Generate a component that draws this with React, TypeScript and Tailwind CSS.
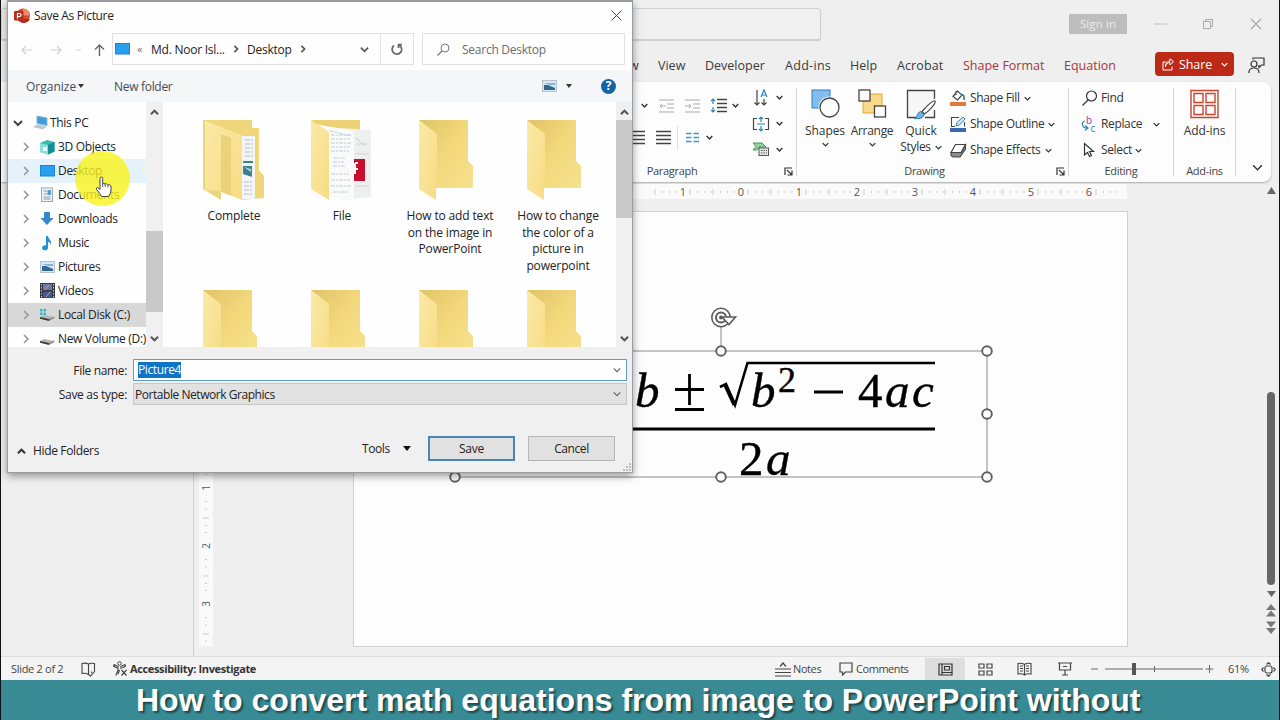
import React from "react";

type Kids = { children?: React.ReactNode };

function Chevron({ dir = "down", size = 8, color = "#333", w = 1.4 }: { dir?: "down" | "up" | "right"; size?: number; color?: string; w?: number }) {
  const d = dir === "down" ? "M1 3 L5 7 L9 3" : dir === "up" ? "M1 7 L5 3 L9 7" : "M3 1 L7 5 L3 9";
  return (
    <svg width={size} height={size} viewBox="0 0 10 10" className="shrink-0">
      <path d={d} fill="none" stroke={color} strokeWidth={w * (10 / size)} />
    </svg>
  );
}

function Lines({ w = 15, color = "#444" }: { w?: number; color?: string }) {
  return (
    <svg width={w} height="15" viewBox={`0 0 ${w} 15`} className="shrink-0">
      <path d={`M0 1.5H${w}M0 5.5H${w}M0 9.5H${w}M0 13.5H${w}`} stroke={color} strokeWidth="1.3" />
    </svg>
  );
}

function Indent({ right }: { right?: boolean }) {
  return (
    <svg width="15" height="14" viewBox="0 0 15 14" className="shrink-0">
      <path d="M0 1H15M8 5H15M8 9H15M0 13H15" stroke="#aaa" strokeWidth="1.2" />
      <path d={right ? "M0 7H6M4 5L6 7L4 9" : "M1 7H7M3 5L1 7L3 9"} stroke="#aaa" fill="none" />
    </svg>
  );
}

function Launcher() {
  return (
    <svg width="9" height="9" viewBox="0 0 9 9">
      <path d="M1 8V1H8M3 3L7.500 7.500M8 3.500V8H3.500" fill="none" stroke="#333" strokeWidth="1.2" />
    </svg>
  );
}

/* ---------- title bar and tabs ---------- */

function TitleBar() {
  return (
    <div className="flex h-[48px] shrink-0 items-center">
      <div className="h-[32px] w-[820px] rounded-[3px] border border-[#cfcfcf] bg-[#f0f0f0] shadow-[0_1px_1px_#ccc]" />
      <div className="ml-[248px] flex h-[20px] w-[58px] items-center justify-center bg-[#bdbdbd] text-[11.5px] tracking-[0.1px] text-[#ececec]">Sign in</div>
      <svg width="14" height="14" viewBox="0 0 14 14" className="ml-[27px]"><path d="M0 7H13" stroke="#c4c4c4" /></svg>
      <svg width="12" height="12" viewBox="0 0 12 12" className="ml-[34px]">
        <path d="M1.500 3.500H8.500V10.500H1.500ZM3.500 3V1.500H10.500V8.500H9" fill="none" stroke="#aaa" />
      </svg>
      <svg width="12" height="12" viewBox="0 0 12 12" className="ml-[36px]"><path d="M1 1L11 11M11 1L1 11" stroke="#aaa" strokeWidth="1.1" /></svg>
    </div>
  );
}

function Tabs() {
  return (
    <div className="flex h-[34px] shrink-0 items-center whitespace-nowrap pl-[628px] pt-[3px] text-[12.5px] text-[#3b3b3b]">
      <span className="w-[29px]">w</span>
      <span className="w-[47px]">View</span>
      <span className="w-[80px]">Developer</span>
      <span className="w-[65px] tracking-[0.3px]">Add-ins</span>
      <span className="w-[47px]">Help</span>
      <span className="w-[66px] tracking-[0.1px]">Acrobat</span>
      <span className="w-[101px] text-[#a4373a]">Shape Format</span>
      <span className="w-[91px] text-[#a4373a]">Equation</span>
      <div className="-mt-[5px] flex h-[24px] w-[79px] items-center rounded-[4px] bg-[#bc2a17] pl-[7px] text-white">
        <svg width="12" height="13" viewBox="0 0 12 13">
          <path d="M4 4H1V12H10V8.500M3.500 9C3.500 6 5.500 4.500 8 4.500V7L11.500 3.700L8 .8V3C5 3 3.500 5.500 3.500 9Z" fill="none" stroke="#fff" />
        </svg>
        <span className="ml-[5px] mt-[2px] w-[42px] tracking-[-0.1px]">Share</span>
        <Chevron size={7} color="#fff" w={1.2} />
      </div>
      <svg width="17" height="17" viewBox="0 0 17 17" className="-mt-[3px] ml-[14px]">
        <circle cx="6" cy="7" r="3" fill="none" stroke="#333" strokeWidth="1.2" />
        <path d="M.8 16C.8 12.500 3 11 6 11S11 12.500 11 16M5 2.500V1H16V8H13.500L11 10.500V8" fill="none" stroke="#333" strokeWidth="1.2" />
      </svg>
    </div>
  );
}

/* ---------- ribbon ---------- */

function Group({ label, w, launcher, labelPad, children }: Kids & { label: string; w: string; launcher?: boolean; labelPad?: string }) {
  return (
    <div className={`flex h-full shrink-0 flex-col ${w}`}>
      <div className="flex h-[77px]">{children}</div>
      <div className="flex h-[18px] items-center text-[11px] tracking-[-0.3px] text-[#444]">
        <span className={`flex-1 whitespace-nowrap text-center ${labelPad ?? ""}`}>{label}</span>
        {launcher && <span className="mr-[3px] w-[9px]"><Launcher /></span>}
      </div>
    </div>
  );
}

function Divider() {
  return <div className="mt-[3px] h-[88px] w-px shrink-0 bg-[#d4d4d4]" />;
}

function BigButton({ icon, w, children }: Kids & { icon: React.ReactNode; w: string }) {
  return (
    <div className={`flex shrink-0 flex-col items-center pt-[4px] text-[12px] leading-[16px] tracking-[-0.1px] text-[#333] ${w}`}>
      <div className="mb-[4px] h-[30px]">{icon}</div>
      {children}
    </div>
  );
}

function SmallRow({ icon, label, tw, chev }: { icon: React.ReactNode; label: string; tw: string; chev?: boolean }) {
  return (
    <div className="flex h-[26px] items-center whitespace-nowrap text-[12px] tracking-[-0.35px] text-[#333]">
      <span className="w-[20px] shrink-0">{icon}</span>
      <span className={tw}>{label}</span>
      {chev && <Chevron size={7} w={1.3} />}
    </div>
  );
}

function Ribbon() {
  return (
    <div className="mr-[8px] flex h-[100px] shrink-0 rounded-br-[8px] rounded-tr-[8px] bg-[#fdfdfd] pt-[3px] shadow-[0_1px_2px_#aaa]">
      <div className="w-[632px] shrink-0" />
      <Group label="Paragraph" w="w-[163px]" launcher labelPad="pr-[73px]">
        <div className="w-[119px]">
          <div className="mt-[13px] flex h-[15px] items-center">
            <span className="ml-[8px]"><Chevron size={7} /></span>
            <span className="ml-[11px]"><Indent /></span>
            <span className="ml-[11px]"><Indent right /></span>
            <svg width="17" height="15" viewBox="0 0 17 15" className="ml-[10px]">
              <path d="M7 1.500H17M7 5.500H17M7 9.500H17M7 13.500H17" stroke="#444" strokeWidth="1.300" />
              <path d="M3 1V6M1 3L3 1L5 3M3 9V14M1 12L3 14L5 12" stroke="#2e86c1" fill="none" strokeWidth="1.200" />
            </svg>
            <span className="ml-[5px]"><Chevron size={7} /></span>
          </div>
          <div className="mt-[17px] flex h-[15px] items-center">
            <Lines w={12} />
            <span className="ml-[11px]"><Lines /></span>
            <span className="ml-[6px] h-[24px] w-px bg-[#ddd]" />
            <svg width="13" height="11" viewBox="0 0 13 11" className="ml-[8px]">
              <path d="M0 1.500H5.500M0 5.500H5.500M0 9.500H5.500M7.500 1.500H13M7.500 5.500H13M7.500 9.500H13" stroke="#3a9bc9" strokeWidth="1.300" />
            </svg>
            <span className="ml-[7px]"><Chevron size={7} /></span>
          </div>
        </div>
        <div className="flex flex-col">
          <div className="flex h-[26px] items-center gap-[6px]">
            <svg width="18" height="18" viewBox="0 0 18 18">
              <path d="M5 1V16M2.500 13.500L5 16L7.500 13.500M12 10V16M9.500 13.500L12 16L14.500 13.500" fill="none" stroke="#444" strokeWidth="1.200" />
              <path d="M9 8L12 1L15 8M10 6H14" fill="none" stroke="#2e86c1" strokeWidth="1.200" />
            </svg>
            <Chevron size={7} />
          </div>
          <div className="flex h-[26px] items-center gap-[6px]">
            <svg width="18" height="16" viewBox="0 0 18 16">
              <path d="M5 2.500H1.500V13.500H5M13 2.500H16.500V13.500H13" fill="none" stroke="#444" strokeWidth="1.200" />
              <path d="M5 8H13M9 1V6M7 3L9 1L11 3M9 15V10M7 13L9 15L11 13" fill="none" stroke="#2e86c1" strokeWidth="1.200" />
            </svg>
            <Chevron size={7} />
          </div>
          <div className="flex h-[26px] items-center gap-[6px]">
            <svg width="18" height="14" viewBox="0 0 18 14">
              <path d="M1 1H10L14 5H7L5 8H1L4 4.500Z" fill="#9bd1a4" stroke="#3b9b55" />
              <rect x="7" y="6" width="9.500" height="7.500" fill="#e8e8e8" stroke="#555" />
              <path d="M9 8.500H15M9 11H15" stroke="#555" strokeDasharray="1.500 1" />
            </svg>
            <Chevron size={7} />
          </div>
        </div>
      </Group>
      <Divider />
      <Group label="Drawing" w="w-[271px]" launcher labelPad="pr-[4px]">
        <div className="w-[4px]" />
        <BigButton w="w-[48px]" icon={
          <svg width="29" height="30" viewBox="0 0 29 30">
            <rect x="1" y="1" width="18" height="18" fill="#83bdee" stroke="#2f7fbf" />
            <circle cx="18.500" cy="18.500" r="11" fill="#fdfdfd" />
            <circle cx="18.500" cy="18.500" r="9.500" fill="#fdfdfd" stroke="#444" strokeWidth="1.300" />
          </svg>}>
          <span>Shapes</span>
          <span className="mt-[2px]"><Chevron size={7} w={1.3} /></span>
        </BigButton>
        <BigButton w="w-[46px]" icon={
          <svg width="29" height="30" viewBox="0 0 29 30">
            <path d="M9 5H24V24H5V12H9Z" fill="#fbd98a" stroke="#e2a336" />
            <rect x="1" y="1" width="11" height="11" fill="#fdfdfd" stroke="#444" strokeWidth="1.300" />
            <rect x="16.500" y="17" width="11" height="11" fill="#fdfdfd" stroke="#444" strokeWidth="1.300" />
          </svg>}>
          <span className="tracking-[-0.3px]">Arrange</span>
          <span className="mt-[2px]"><Chevron size={7} w={1.3} /></span>
        </BigButton>
        <BigButton w="w-[52px]" icon={
          <svg width="32" height="31" viewBox="0 0 32 31">
            <path d="M11 28.500H2.500V1.500H29.500V10M29.500 21V28.500H20" fill="#f7f7f7" stroke="#444" strokeWidth="1.300" />
            <path d="M30 12C31.500 14 24 22 19.500 25L17 22.500C21 18 28 10.500 30 12Z" fill="#fff" stroke="#444" strokeWidth="1.200" />
            <path d="M19 25.500C18 29 15 30 9.500 29.500C13 28.500 11.500 24 15.500 22.500Z" fill="#6db5e8" stroke="#2374ab" />
          </svg>}>
          <span>Quick</span>
          <span className="flex items-center gap-[4px] tracking-[-0.3px]">Styles <Chevron size={7} w={1.3} /></span>
        </BigButton>
        <div className="ml-[3px]">
          <SmallRow label="Shape Fill" tw="w-[54px]" chev icon={
            <svg width="17" height="17" viewBox="0 0 17 17">
              <path d="M7.500 1L3 6.500L7.500 10L12 5Z M6 1V5" fill="none" stroke="#444" strokeWidth="1.200" />
              <path d="M12 4.500C14.500 5 14.500 7 14 10" fill="none" stroke="#2e6fa8" strokeWidth="1.600" />
              <rect y="12" width="16" height="4" fill="#dd7a3c" />
            </svg>} />
          <SmallRow label="Shape Outline" tw="w-[78px]" chev icon={
            <svg width="17" height="17" viewBox="0 0 17 17">
              <path d="M9 1.500H1.500V10.500H5M14.500 6V10.500" fill="none" stroke="#444" strokeWidth="1.100" />
              <path d="M6 10L7 6.500L13 1L15 3L9.500 9Z" fill="#cde6f7" stroke="#2e86c1" />
              <rect y="12" width="16" height="4" fill="#3f66b0" />
            </svg>} />
          <SmallRow label="Shape Effects" tw="w-[75px]" chev icon={
            <svg width="17" height="15" viewBox="0 0 17 15">
              <path d="M1 9.500V12.500L3 14H10L15.500 6V2L11 9.500Z" fill="#8d8d8d" stroke="#444" strokeWidth="1.100" />
              <path d="M1 9.500L5.500 1.500H15.500L11 9.500Z" fill="#fff" stroke="#444" strokeWidth="1.200" />
            </svg>} />
        </div>
      </Group>
      <Divider />
      <Group label="Editing" w="w-[104px]">
        <div className="pl-[12px]">
          <SmallRow label="Find" tw="w-[40px]" icon={
            <svg width="17" height="17" viewBox="0 0 17 17"><circle cx="10.500" cy="6" r="5" fill="none" stroke="#333" strokeWidth="1.200" /><path d="M7 10L1.500 15.500" stroke="#333" strokeWidth="1.300" /></svg>} />
          <SmallRow label="Replace" tw="w-[52px]" chev icon={
            <svg width="17" height="17" viewBox="0 0 17 17" className="overflow-visible">
              <text x="5" y="8" fontSize="10" fill="#a33c9c">b</text>
              <text x="9.500" y="15.500" fontSize="10" fill="#2e86c1">c</text>
              <path d="M4 5C0 6 .5 12 6 12M4 9.500L7 12L4 14.500" fill="none" stroke="#2e86c1" strokeWidth="1.200" />
            </svg>} />
          <SmallRow label="Select" tw="w-[34px]" chev icon={
            <svg width="15" height="16" viewBox="0 0 15 16"><path d="M3.500 1.500V13L6.500 10.500L8.500 14.500L10.500 13.500L8.500 9.500H12.500Z" fill="#fff" stroke="#333" strokeWidth="1.200" /></svg>} />
        </div>
      </Group>
      <Divider />
      <Group label="Add-ins" w="w-[61px]">
        <BigButton w="w-[61px]" icon={
          <svg width="29" height="30" viewBox="0 0 29 30">
            <path d="M1 1.500H28V28.500H1ZM4 4.500H13V13.500H4ZM16 4.500H25V13.500H16ZM4 16.500H13V25.500H4ZM16 16.500H25V25.500H16Z" fill="none" stroke="#c9452f" strokeWidth="1.400" />
          </svg>}>
          <span>Add-ins</span>
        </BigButton>
      </Group>
      <Divider />
      <div className="flex flex-1 items-end justify-center pb-[9px] pl-[8px]"><Chevron size={11} /></div>
    </div>
  );
}

/* ---------- work area ---------- */

function HRuler() {
  const nums = ["1", "0", "1", "2", "3", "4", "5", "6"];
  return (
    <div className="ml-[212px] flex h-[15px] w-[914px] overflow-hidden bg-[#fafafa] pl-[441px] text-[11px] leading-[14px] text-[#555]">
      {nums.map((n, i) => (
        <div key={i} className="flex w-[58px] shrink-0 items-center justify-between">
          <Ticks /><span>{n}</span><Ticks />
        </div>
      ))}
    </div>
  );
}

function Ticks() {
  return (
    <svg width="23" height="8" viewBox="0 0 23 8" className="shrink-0">
      <path d="M1 1V7M8.500 3V5M15.500 3V5M22 3V5" stroke="#ccc" />
    </svg>
  );
}

function VRuler() {
  return (
    <div className="ml-[5px] flex h-[435px] w-[14px] flex-col items-center bg-[#fafafa] pt-[248px] text-[10px] leading-[12px] text-[#555]">
      {["1", "2", "3"].map((n) => (
        <div key={n} className="flex h-[58px] shrink-0 flex-col items-center justify-between">
          <svg width="8" height="22" viewBox="0 0 8 22"><path d="M1 1H7M3 8.500H5M3 15.500H5" stroke="#ccc" /></svg>
          <span className="-rotate-90">{n}</span>
          <svg width="8" height="22" viewBox="0 0 8 22"><path d="M3 6.500H5M3 14H5" stroke="#ccc" /></svg>
        </div>
      ))}
      <svg width="8" height="10" viewBox="0 0 8 10"><path d="M1 1H7M3 8H5" stroke="#ccc" /></svg>
    </div>
  );
}

function Equation() {
  const handles = [[267, 6], [533, 6], [533, 69], [1, 132], [267, 132], [533, 132], [1, 6], [1, 69]];
  return (
    <svg width="560" height="190" viewBox="0 -45 560 190" className="absolute left-[100px] top-[88px] overflow-visible">
      <rect x="1" y="6" width="532" height="126" fill="none" stroke="#a6a6a6" strokeWidth="1.300" />
      <path d="M267 -18V6" stroke="#a6a6a6" strokeWidth="1.300" />
      <g fontFamily="'Liberation Serif', serif" fontSize="49" fill="#000" stroke="#000" strokeWidth=".4">
        <text x="181" y="62" fontStyle="italic">b</text>
        <text x="297" y="62" fontStyle="italic">b</text>
        <text x="324" y="47" fontSize="36">2</text>
        <text x="404" y="62">4</text>
        <text x="431" y="62" fontStyle="italic">a</text>
        <text x="458" y="62" fontStyle="italic">c</text>
        <text x="285" y="130">2</text>
        <text x="312" y="130" fontStyle="italic">a</text>
      </g>
      <path d="M221 44.500H250M235.500 29V60M221 64.500H250M360 47H389" stroke="#000" strokeWidth="2.800" fill="none" />
      <path d="M266 42L272 39L281 60L293.500 18H481" stroke="#000" strokeWidth="2.600" fill="none" />
      <path d="M271.500 40.500L280.500 60" stroke="#000" strokeWidth="4" />
      <path d="M100 84H481" stroke="#000" strokeWidth="3" />
      {handles.map(([x, y]) => <circle key={`${x}-${y}`} cx={x} cy={y} r="4.800" fill="#fff" stroke="#606060" strokeWidth="1.900" />)}
      <circle cx="267" cy="-27.500" r="10" fill="#5c5c5c" />
      <circle cx="267" cy="-27.500" r="7.200" fill="none" stroke="#fff" strokeWidth="2.400" />
      <circle cx="267" cy="-27.500" r="3" fill="none" stroke="#fff" strokeWidth="2" />
      <path d="M268 -28H281.500L275 -20.500Z" fill="#fff" stroke="#5c5c5c" strokeWidth="1.600" />
    </svg>
  );
}

function WorkArea() {
  return (
    <div className="flex h-[474px] shrink-0 pt-[2px]">
      <div className="w-[193px] border-r border-[#d0d0d0]" />
      <div className="flex flex-1 flex-col">
        <div className="-ml-[193px]"><HRuler /></div>
        <div className="flex pt-[12px]">
          <VRuler />
          <div className="relative ml-[140px] h-[436px] w-[775px] border border-[#cfcfcf] bg-[#fdfdfd]">
            <Equation />
          </div>
        </div>
      </div>
      <div className="flex w-[16px] flex-col items-center pt-[3px]">
        <svg width="9" height="7" viewBox="0 0 9 7"><path d="M0 7L4.500 0L9 7Z" fill="#666" /></svg>
        <div className="mt-[198px] h-[193px] w-[8px] rounded-[4px] bg-[#666]" />
        <svg width="9" height="6" viewBox="0 0 9 6" className="mt-[6px]"><path d="M0 0L4.500 6L9 0Z" fill="#666" /></svg>
        <svg width="10" height="13" viewBox="0 0 10 13" className="mt-[7px]"><path d="M0 6L5 0L10 6ZM0 12.500L5 6.500L10 12.500Z" fill="#777" /></svg>
        <svg width="10" height="13" viewBox="0 0 10 13" className="mt-[4px]"><path d="M0 .5L5 6.500L10 .5ZM0 7L5 13L10 7Z" fill="#777" /></svg>
      </div>
    </div>
  );
}

function StatusBar() {
  return (
    <div className="flex h-[24px] shrink-0 items-center whitespace-nowrap border-t border-[#dcdcdc] bg-[#f4f4f4] pt-px text-[11px] tracking-[-0.3px] text-[#444]">
      <span className="ml-[10px] w-[70px] pt-px">Slide 2 of 2</span>
      <svg width="15" height="15" viewBox="0 0 15 15">
        <path d="M7.500 2V12M7.500 2C5.500 1 3 1 1 1.500V11.500C3 11 5.500 11 7.500 12.500L9.500 14L13.500 9.500V1.500C11.500 1 9.500 1 7.500 2M10 9.500L11 11" fill="none" stroke="#444" strokeWidth="1.100" />
      </svg>
      <svg width="15" height="16" viewBox="0 0 15 16" className="ml-[17px]">
        <circle cx="6.500" cy="2.500" r="1.800" fill="none" stroke="#444" />
        <path d="M1 3.500L5 5.500V9L3 14.500M12 3.500L8 5.500V8M1 3.500L.5 5L4 7M12 3.500L12.500 5L9.500 7M6.500 9L5 13M8.500 9L13.500 14.500M13.500 9L8.500 14.500" fill="none" stroke="#444" strokeWidth="1.200" />
      </svg>
      <span className="ml-[2px] w-[645px] pt-px font-bold tracking-[-0.35px] text-[#333]">Accessibility: Investigate</span>
      <svg width="16" height="15" viewBox="0 0 16 15"><path d="M0 7H16M0 10.500H16M0 14H16M5 4.500L8 1L11 4.500" fill="none" stroke="#444" strokeWidth="1.200" /></svg>
      <span className="ml-[2px] w-[46px] pt-px tracking-[-0.4px]">Notes</span>
      <svg width="14" height="14" viewBox="0 0 14 14"><path d="M1 1H13V10H6.500L3.500 13V10H1Z" fill="none" stroke="#444" strokeWidth="1.200" /></svg>
      <span className="ml-[3px] w-[69px] pt-px tracking-[-0.45px]">Comments</span>
      <span className="flex h-full w-[40px] items-center justify-center bg-[#dedede]">
        <svg width="15" height="13" viewBox="0 0 15 13"><path d="M1 1H14V12H1ZM4 1V12M4 9.500H14M6.500 3.500H11.500V7H6.500Z" fill="none" stroke="#333" strokeWidth="1.200" /></svg>
      </span>
      <svg width="15" height="13" viewBox="0 0 15 13" className="ml-[13px]"><path d="M1 1H6V5H1ZM9 1H14V5H9ZM1 8H6V12H1ZM9 8H14V12H9Z" fill="none" stroke="#444" strokeWidth="1.200" /></svg>
      <svg width="15" height="14" viewBox="0 0 15 14" className="ml-[24px]"><path d="M7.500 2.500C5.500 1 3 1 1 1.500V12C3 11.500 5.500 11.500 7.500 13C9.500 11.500 12 11.500 14 12V1.500C12 1 9.500 1 7.500 2.500V13M3 4H6M3 6.500H6M3 9H6M9 4H12M9 6.500H12M9 9H12" fill="none" stroke="#444" strokeWidth="1.100" /></svg>
      <svg width="14" height="14" viewBox="0 0 14 14" className="ml-[26px]"><path d="M0 1H14M1.500 1V8H12.500V1M7 8V13M4 13H10M5 4.500H9" fill="none" stroke="#444" strokeWidth="1.200" /></svg>
      <svg width="123" height="14" viewBox="0 0 123 14" className="ml-[19px]">
        <path d="M0 7H7M118.500 3V11M114.500 7H122.500" stroke="#666" />
        <path d="M14 7H112" stroke="#666" /><path d="M63.500 4V10" stroke="#666" />
        <rect x="41" y="1" width="4" height="12" fill="#555" />
      </svg>
      <span className="ml-[14px] w-[33px] pt-px">61%</span>
      <svg width="15" height="15" viewBox="0 0 15 15"><rect x="4" y="4" width="7" height="7" rx="2" fill="none" stroke="#444" strokeWidth="1.200" /><path d="M5.500 2.500L7.500 .7L9.500 2.500M5.500 12.500L7.500 14.300L9.500 12.500M2.500 5.500L.7 7.500L2.500 9.500M12.500 5.500L14.300 7.500L12.500 9.500" fill="none" stroke="#444" strokeWidth="1.200" /></svg>
    </div>
  );
}

/* ---------- save dialog ---------- */

function Folder({ kind }: { kind?: "docs" | "file" }) {
  return (
    <svg width="64" height="86" viewBox="0 0 64 86" className="shrink-0">
      <defs>
        <linearGradient id="fback" x1="0" y1="0" x2="1" y2="1"><stop offset="0" stopColor="#dfc368" /><stop offset=".5" stopColor="#f3d97b" /><stop offset="1" stopColor="#f7e190" /></linearGradient>
        <linearGradient id="ffront" x1="0" y1="0" x2="1" y2="1"><stop offset="0" stopColor="#fbe9a6" /><stop offset="1" stopColor="#f7dc84" /></linearGradient>
      </defs>
      {!kind && <>
        <path d="M0 0H49V41L54 46V66Q54 68 52 68H14Z" fill="url(#fback)" />
        <path d="M0 0L18 14V54L17 56V80L0 69Z" fill="url(#ffront)" />
      </>}
      {kind === "docs" && <>
        <path d="M0 0H49V8H56V50L61 56V78L38 80Z" fill="#f0d67a" />
        <path d="M0 0L18 12V80L0 69Z" fill="#eed47b" />
        <path d="M39 16H52V79H38Z" fill="#f2f4f6" />
        <path d="M42 20H50M42 24H50M42 28H50M42 32H50M42 36H50M41 62H49M41 66H49M41 70H49M41 74H49" stroke="#b7bfc7" strokeDasharray="5 1" />
        <path d="M40 41H50V43H40ZM40 46H49V57L40 54Z" fill="#3f8090" />
        <path d="M41 47L48 52V49Z" fill="#a9d3ea" />
        <path d="M2 1L39 15V80L17 71L2 70Z" fill="url(#ffront)" />
        <path d="M18 14L28 18V76L18 72Z" fill="#e3c76b" opacity=".6" />
      </>}
      {kind === "file" && <>
        <path d="M0 0H49V30H0Z" fill="#edd274" />
        <path d="M28 8L60 10V77L30 80Z" fill="#eef0f0" />
        <path d="M45 18L54 26M46 24H56M44 34H58M44 66H58" stroke="#ccd3d3" />
        <rect x="43" y="39" width="11" height="22" fill="#c8102e" />
        <path d="M44 43H47M44 49H47M44 43V54" stroke="#fff" strokeWidth="2" />
        <path d="M4 4L43 11V82L18 76Z" fill="#f9fafa" />
        <path d="M19 11L40 16M20 15H40M20 19H39M20 23H40M20 27H39M20 31H38M22 38H34M22 42H33M22 46H34M20 54H38M20 60H39M20 66H40M22 72H38" stroke="#c3ccd6" strokeDasharray="4 1 2 1" />
        <path d="M0 0L18 12V80L0 69Z" fill="url(#ffront)" />
      </>}
    </svg>
  );
}

function FolderItem({ kind, lines = [] }: { kind?: "docs" | "file"; lines?: string[] }) {
  return (
    <div className="flex h-[170px] w-[108px] flex-col items-center whitespace-nowrap text-[12px] leading-[16.600px] tracking-[-0.15px] text-[#222]">
      <div className="mb-[1px] ml-[2px] h-[87px]"><Folder kind={kind} /></div>
      {lines.map((l) => <span key={l}>{l}</span>)}
    </div>
  );
}

function TreeRow({ label, icon, bg = "", root }: { label: string; icon: React.ReactNode; bg?: string; root?: boolean }) {
  return (
    <div className={`flex h-[24px] shrink-0 items-center whitespace-nowrap text-[12px] tracking-[-0.32px] text-[#222] ${bg} ${root ? "pl-[5px]" : "pl-[13px]"}`}>
      <span className={root ? "w-[20px]" : "w-[19px]"}><Chevron dir={root ? "down" : "right"} size={10} color={root ? "#444" : "#999"} w={root ? 2 : 1.6} /></span>
      <span className={root ? "w-[17px]" : "w-[18px]"}>{icon}</span>
      <span>{label}</span>
    </div>
  );
}

const pc = (
  <svg width="16" height="16" viewBox="0 0 16 16"><path d="M4 1L14 3V10.500L4 8.500Z" fill="#3f9fdc" stroke="#8ab8d8" /><path d="M0 12L4 9.500L14 11.500L10 14.500Z" fill="#b9c7d1" /></svg>
);
const cube = (
  <svg width="15" height="16" viewBox="0 0 15 16"><path d="M0 4L7 1L14.500 3V12.500L8 15.500L0 13Z" fill="#35bdb9" /><path d="M0 4L8 6V15.500L0 13Z" fill="#8de0da" /><path d="M8 6L14.500 3V12.500L8 15.500Z" fill="#158f94" /><path d="M3 8H7V12H3Z" fill="#e9fffd" /></svg>
);
const screen = <svg width="15" height="12" viewBox="0 0 15 12"><rect width="15" height="11.500" fill="#1784d8" /><rect x="1" y="1" width="13" height="9.500" fill="#29a0ef" /></svg>;
const doc = (
  <svg width="14" height="16" viewBox="0 0 14 16"><rect x="1.500" y="1" width="11" height="13.500" fill="#eef4f8" stroke="#9aa7b1" /><path d="M3.500 4H7M3.500 7H7M3.500 10H10.500M3.500 12H10.500" stroke="#8799a6" /><rect x="7.500" y="3" width="3.500" height="5" fill="#5a9ccc" /></svg>
);
const down = <svg width="14" height="14" viewBox="0 0 14 14"><path d="M4 0H10V6H13.500L7 13L.5 6H4Z" fill="#3486cf" /></svg>;
const note = <svg width="14" height="16" viewBox="0 0 14 16"><path d="M6 1H8C8 4 12 5 11 10C10.500 8 9.500 7 8 7V12.500A3 2.500 0 1 1 6 10.500Z" fill="#1e93cf" /></svg>;
const photo = <svg width="15" height="12" viewBox="0 0 15 12"><rect x=".5" y=".5" width="14" height="11" fill="#d7e8f3" stroke="#b6c1c9" /><path d="M2 5L6 5L13 8V10H2Z" fill="#33678c" /><path d="M2 3H13V5H8Z" fill="#7db4d8" /></svg>;
const film = <svg width="15" height="16" viewBox="0 0 15 16"><rect width="15" height="15" fill="#333842" /><rect x="3" y="1" width="9" height="6" fill="#6b79a8" /><rect x="3" y="8.500" width="9" height="6" fill="#3f5c94" /><path d="M1.500 1V15M13.500 1V15" stroke="#ccc" strokeDasharray="1.500 1.500" /><path d="M5 7L9 2M6 14L10 9" stroke="#c0a06a" /></svg>;
const disk = (win: boolean) => (
  <svg width="15" height="12" viewBox="0 0 15 12">
    {win && <path d="M0 0H2.500V2.500H0ZM3.500 0H6V2.500H3.500ZM0 3.500H2.500V6H0ZM3.500 3.500H6V6H3.500Z" fill="#35b8c8" />}
    <path d="M0 8L4 6L14.500 8L9 11Z" fill="#b5b5b5" /><path d="M0 8L9 10V12L0 9.800Z" fill="#3c3c3c" /><path d="M9 10L14.500 7.500V9L9 12Z" fill="#8a8a8a" />
  </svg>
);

function ScrollBar({ w, thumbTop, thumbH }: { w: string; thumbTop: string; thumbH: string }) {
  return (
    <div className={`flex h-full shrink-0 flex-col items-center bg-[#f0f0f0] ${w}`}>
      <div className="flex h-[18px] items-center pt-[3px]"><Chevron dir="up" size={9} color="#555" w={2} /></div>
      <div className={thumbTop} />
      <div className={`w-full bg-[#c9c9c9] ${thumbH}`} />
      <div className="flex-1" />
      <div className="flex h-[18px] items-center"><Chevron size={9} color="#555" w={2} /></div>
    </div>
  );
}

function Dialog() {
  return (
    <div className="absolute left-[6px] top-0 flex h-[473px] w-[626px] flex-col overflow-hidden border border-t-2 border-[#9a9da0] bg-[#fefefe] shadow-[0_3px_8px_rgba(0,0,0,0.4)]">
      <div className="flex h-[29px] shrink-0 items-center pb-[2px] pl-[6px]">
        <svg width="17" height="16" viewBox="0 0 17 16"><circle cx="9" cy="7.500" r="7" fill="#d4492c" /><path d="M9 .5A7 7 0 0 1 16 7.500H9Z" fill="#f08a6d" /><path d="M3 11H16A7 7 0 0 1 4 12Z" fill="#b02c1b" /><rect x="0" y="3" width="9.500" height="9.500" rx="1" fill="#b5301d" /><path d="M3.500 10.500V5.500H5.500A1.500 1.500 0 0 1 5.500 8.500H3.500" fill="none" stroke="#fff" strokeWidth="1.200" /></svg>
        <span className="ml-[3px] flex-1 pt-px text-[12px] tracking-[-0.35px] text-[#222]">Save As Picture</span>
        <svg width="11" height="11" viewBox="0 0 11 11" className="mr-[10px]"><path d="M.5 .5L10.500 10.500M10.500 .5L.5 10.500" stroke="#444" /></svg>
      </div>
      <div className="flex h-[39px] shrink-0 pt-[2px]">
        <div className="flex h-[32px] w-[104px] items-center pl-[13px] pt-[2px]">
          <svg width="86" height="14" viewBox="0 0 86 14">
            <path d="M11 7H1M5 3L1 7L5 11M30 7H40M36 3L40 7L36 11M55 7H60" fill="none" stroke="#d0d0d0" strokeWidth="1.200" />
            <path d="M78.500 13V2M74 6.500L78.500 2L83 6.500" fill="none" stroke="#666" strokeWidth="1.400" />
          </svg>
        </div>
        <div className="flex h-[32px] w-[269px] items-center border border-[#e2e2e2] pl-[2px] text-[12px] text-[#222]">
          {screen}
          <span className="ml-[7px] w-[14px] text-[11px] text-[#777]">«</span>
          <span className="w-[81px] pt-px tracking-[-0.25px]">Md. Noor Isl...</span>
          <span className="w-[15px]"><Chevron dir="right" size={8} color="#555" w={1.7} /></span>
          <span className="w-[52px] pt-px tracking-[-0.25px]">Desktop</span>
          <span className="w-[61px]"><Chevron dir="right" size={8} color="#555" w={1.7} /></span>
          <Chevron size={9} color="#555" w={1.8} />
        </div>
        <div className="flex h-[32px] w-[33px] items-center justify-center border border-l-0 border-[#e2e2e2]">
          <svg width="12" height="13" viewBox="0 0 12 13"><path d="M3 2.500A4.800 4.800 0 1 0 8.500 2.300M11 1.500H7.500V5" fill="none" stroke="#666" strokeWidth="1.700" /></svg>
        </div>
        <div className="ml-[8px] flex h-[32px] w-[203px] items-center border border-[#e2e2e2] pl-[14px] text-[12px] tracking-[-0.25px] text-[#6c6c6c]">
          <svg width="13" height="13" viewBox="0 0 13 13"><circle cx="8" cy="5" r="4" fill="none" stroke="#777" /><path d="M5 8L.5 12.500" stroke="#777" strokeWidth="1.200" /></svg>
          <span className="ml-[12px] pt-[2px]">Search Desktop</span>
        </div>
      </div>
      <div className="flex h-[32px] shrink-0 items-center bg-[#f5f6f8] text-[12px] text-[#444a58]">
        <span className="ml-[18px] w-[52px] pt-px">Organize</span>
        <svg width="6" height="4" viewBox="0 0 6 4"><path d="M0 0H6L3 4Z" fill="#333" /></svg>
        <span className="ml-[30px] w-[399px] pt-px tracking-[-0.3px]">New folder</span>
        <span className="ml-[29px]">{photo}</span>
        <svg width="6" height="4" viewBox="0 0 6 4" className="ml-[9px]"><path d="M0 0H6L3 4Z" fill="#333" /></svg>
        <span className="ml-[29px] flex h-[15px] w-[15px] items-center justify-center rounded-full bg-[#1464a5] text-[12px] font-bold text-white">?</span>
      </div>
      <div className="flex h-[245px] shrink-0">
        <div className="flex w-[138px] flex-col overflow-hidden pt-[9px]">
          <TreeRow root label="This PC" icon={pc} />
          <TreeRow label="3D Objects" icon={cube} />
          <TreeRow label="Desktop" icon={screen} bg="bg-[#e5f2fb]" />
          <TreeRow label="Documents" icon={doc} />
          <TreeRow label="Downloads" icon={down} />
          <TreeRow label="Music" icon={note} />
          <TreeRow label="Pictures" icon={photo} />
          <TreeRow label="Videos" icon={film} />
          <TreeRow label="Local Disk (C:)" icon={disk(true)} bg="bg-[#d8d8d8]" />
          <TreeRow label="New Volume (D:)" icon={disk(false)} />
        </div>
        <ScrollBar w="w-[17px]" thumbTop="h-[111px]" thumbH="h-[81px]" />
        <div className="flex w-[453px] flex-wrap content-start overflow-hidden pl-[17px] pt-[18px]">
          <FolderItem kind="docs" lines={["Complete"]} />
          <FolderItem kind="file" lines={["File"]} />
          <FolderItem lines={["How to add text", "on the image in", "PowerPoint"]} />
          <FolderItem lines={["How to change", "the color of a", "picture in", "powerpoint"]} />
          <FolderItem /><FolderItem /><FolderItem /><FolderItem />
        </div>
        <ScrollBar w="w-[16px]" thumbTop="h-0" thumbH="h-[98px]" />
      </div>
      <div className="flex flex-1 flex-col bg-[#f0f0f0] pt-[12px] text-[12px] tracking-[-0.25px] text-[#222]">
        <div className="flex h-[22px] shrink-0 items-center">
          <span className="w-[125px] pr-[6px] pt-px text-right tracking-[-0.35px]">File name:</span>
          <div className="flex h-full w-[494px] items-center border border-[#5f9fc9] bg-[#fefefe] pl-[4px] pr-[5px]">
            <span className="h-[16px] bg-[#0f74c4] leading-[16px] tracking-[-0.4px] text-white">Picture4</span>
            <span className="flex-1" /><Chevron color="#666" w={1.2} />
          </div>
        </div>
        <div className="mt-[2px] flex h-[22px] shrink-0 items-center">
          <span className="w-[125px] pr-[6px] pt-px text-right tracking-[-0.3px]">Save as type:</span>
          <div className="flex h-full w-[494px] items-center border border-[#c8c8c8] bg-[#e2e2e2] pl-[1px] pr-[5px]">
            <span className="flex-1 pt-px tracking-[-0.45px]">Portable Network Graphics</span><Chevron color="#666" w={1.2} />
          </div>
        </div>
        <div className="mt-[31px] flex h-[25px] shrink-0 items-center">
          <span className="ml-[9px] mt-[5px] w-[16px]"><Chevron dir="up" size={9} w={2} /></span>
          <span className="mt-[5px] w-[329px] tracking-[-0.35px]">Hide Folders</span>
          <span className="w-[41px] tracking-[-0.4px]">Tools</span>
          <svg width="8" height="5" viewBox="0 0 8 5"><path d="M0 0H8L4 5Z" fill="#111" /></svg>
          <div className="ml-[17px] flex h-[25px] w-[87px] items-center justify-center border-2 border-[#4a86b4] bg-[#e1e1e1]">Save</div>
          <div className="ml-[13px] flex h-[25px] w-[87px] items-center justify-center border border-[#b5b5b5] bg-[#e1e1e1] tracking-[-0.4px]">Cancel</div>
        </div>
        <div className="flex flex-1 items-end justify-end pb-px pr-px">
          <svg width="8" height="8" viewBox="0 0 8 8"><path d="M6 0H8V2H6ZM3 3H5V5H3ZM6 3H8V5H6ZM0 6H2V8H0ZM3 6H5V8H3ZM6 6H8V8H6Z" fill="#bdbdbd" /></svg>
        </div>
      </div>
    </div>
  );
}

function Pointer() {
  return (
    <div className="absolute left-[74px] top-[151px] h-[55px] w-[55px] rounded-full bg-[#f9f31c]/80">
      <svg width="18" height="22" viewBox="0 0 18 22" className="absolute left-[20px] top-[25px]">
        <path d="M5 2.500Q5 1 6.300 1T7.700 2.500V8Q8.500 6.800 10 8Q11.500 7 12.500 8.700Q14.500 8 16 10V14Q16 17 13.500 20.500H6.500Q5.500 18 1.500 13.500Q.8 11.800 2.500 11.500L5 13.500Z" fill="#fff" stroke="#444" />
        <path d="M10.200 8V11M13 9V11.500M7.700 8V11" stroke="#444" strokeWidth=".9" />
      </svg>
    </div>
  );
}

export default function App() {
  return (
    <div className="relative flex h-[720px] w-[1280px] flex-col overflow-hidden border-x border-[#111] bg-[#efefef] font-['Open_Sans','Noto_Sans',sans-serif]">
      <TitleBar />
      <Tabs />
      <Ribbon />
      <WorkArea />
      <StatusBar />
      <div className="flex h-[40px] shrink-0 items-center overflow-hidden whitespace-nowrap bg-[#388b94] pl-[135px] font-['Liberation_Sans',sans-serif] text-[32px] font-bold leading-[40px] text-white [text-shadow:2px_2px_2px_rgba(0,0,0,0.5)]">
        How to convert math equations from image to PowerPoint without
      </div>
      <Dialog />
      <Pointer />
    </div>
  );
}
